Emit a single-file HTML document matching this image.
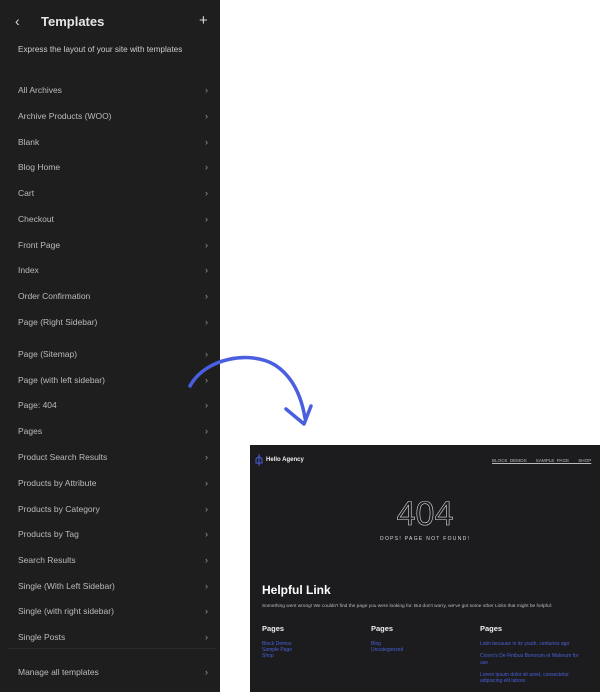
<!DOCTYPE html>
<html><head><style>
*{margin:0;padding:0;box-sizing:border-box}
body{width:600px;height:692px;background:#fff;position:relative;overflow:hidden;font-family:"Liberation Sans",sans-serif}
#side{position:absolute;left:0;top:0;width:220px;height:692px;background:#1e1e1e;color:#ccc}
.it{position:absolute;left:18px;width:190px;font-size:8.5px;color:#bbb;line-height:10px}
.it span{position:absolute;right:0;top:0;color:#999;font-size:9px}
#shot{position:absolute;left:250px;top:445px;width:350px;height:247px;background:#1c1c1f;color:#eee}
.lk{color:#4a5fd8;font-size:5px;line-height:6.2px}
</style></head><body>
<div id="side">
<div style="position:absolute;left:15px;top:13px;font-size:14px;color:#ddd">&#8249;</div>
<div style="position:absolute;left:41px;top:14px;font-size:13px;font-weight:bold;color:#e6e6e6">Templates</div>
<div style="position:absolute;left:199px;top:12px;font-size:15px;color:#ddd">+</div>
<div style="position:absolute;left:18px;top:45px;font-size:8.2px;color:#ccc">Express the layout of your site with templates</div>
<div class="it" style="top:85px">All Archives<span>›</span></div>
<div class="it" style="top:111px">Archive Products (WOO)<span>›</span></div>
<div class="it" style="top:137px">Blank<span>›</span></div>
<div class="it" style="top:162px">Blog Home<span>›</span></div>
<div class="it" style="top:188px">Cart<span>›</span></div>
<div class="it" style="top:214px">Checkout<span>›</span></div>
<div class="it" style="top:240px">Front Page<span>›</span></div>
<div class="it" style="top:265px">Index<span>›</span></div>
<div class="it" style="top:291px">Order Confirmation<span>›</span></div>
<div class="it" style="top:317px">Page (Right Sidebar)<span>›</span></div>
<div class="it" style="top:349px">Page (Sitemap)<span>›</span></div>
<div class="it" style="top:375px">Page (with left sidebar)<span>›</span></div>
<div class="it" style="top:400px">Page: 404<span>›</span></div>
<div class="it" style="top:426px">Pages<span>›</span></div>
<div class="it" style="top:452px">Product Search Results<span>›</span></div>
<div class="it" style="top:478px">Products by Attribute<span>›</span></div>
<div class="it" style="top:504px">Products by Category<span>›</span></div>
<div class="it" style="top:529px">Products by Tag<span>›</span></div>
<div class="it" style="top:555px">Search Results<span>›</span></div>
<div class="it" style="top:581px">Single (With Left Sidebar)<span>›</span></div>
<div class="it" style="top:606px">Single (with right sidebar)<span>›</span></div>
<div class="it" style="top:632px">Single Posts<span>›</span></div>
<div style="position:absolute;left:8px;top:648px;width:208px;height:1px;background:#2c2c2c"></div>
<div class="it" style="top:667px">Manage all templates<span>›</span></div>
</div>
<svg style="position:absolute;left:0;top:0" width="600" height="692">
<path d="M190 386 C205 358 250 350 275 365 C295 378 302 400 305 418" fill="none" stroke="#4a5fe0" stroke-width="3.5" stroke-linecap="round"/>
<path d="M286 409 L304 424 L311 406" fill="none" stroke="#4a5fe0" stroke-width="3.5" stroke-linecap="round" stroke-linejoin="round"/>
</svg>
<div id="shot">
<svg style="position:absolute;left:5px;top:8px" width="8" height="14"><path d="M4 1 L4 13 M1 6 Q4 2 7 6 L7 10 L1 10 Z" fill="none" stroke="#4a5fd8" stroke-width="1"/></svg>
<div style="position:absolute;left:16px;top:12px;font-size:6px;font-weight:bold">Hello Agency</div>
<div style="position:absolute;left:242px;top:13px;font-size:4.6px;color:#bbb;text-decoration:underline;word-spacing:1px">BLOCK DEMOS &nbsp;&nbsp; SAMPLE PAGE &nbsp;&nbsp; SHOP</div>
<div style="position:absolute;left:0;width:350px;top:50px;text-align:center;font-size:34px;color:transparent;-webkit-text-stroke:0.6px #ddd">404</div>
<div style="position:absolute;left:0;width:350px;top:91px;text-align:center;font-size:5px;letter-spacing:1.3px;color:#ddd">OOPS! PAGE NOT FOUND!</div>
<div style="position:absolute;left:12px;top:138px;font-size:12px;font-weight:bold;color:#fff">Helpful Link</div>
<div style="position:absolute;left:12px;top:159px;width:305px;font-size:4.8px;line-height:5.6px;color:#bbb">Something went wrong! We couldn't find the page you were looking for. But don't worry, we've got some other Links that might be helpful:</div>
<div style="position:absolute;left:12px;top:179px;font-size:7.5px;font-weight:bold">Pages</div>
<div style="position:absolute;left:121px;top:179px;font-size:7.5px;font-weight:bold">Pages</div>
<div style="position:absolute;left:230px;top:179px;font-size:7.5px;font-weight:bold">Pages</div>
<div class="lk" style="position:absolute;left:12px;top:196px">Block Demos<br>Sample Page<br>Shop</div>
<div class="lk" style="position:absolute;left:121px;top:196px">Blog<br>Uncategorized</div>
<div class="lk" style="position:absolute;left:230px;top:196px;width:105px">Latin because in its youth, centuries ago<br><br>Cicero's De Finibus Bonorum et Malorum for use<br><br>Lorem ipsum dolor sit amet, consectetur adipiscing elit labore.</div>
</div>
</body></html>
